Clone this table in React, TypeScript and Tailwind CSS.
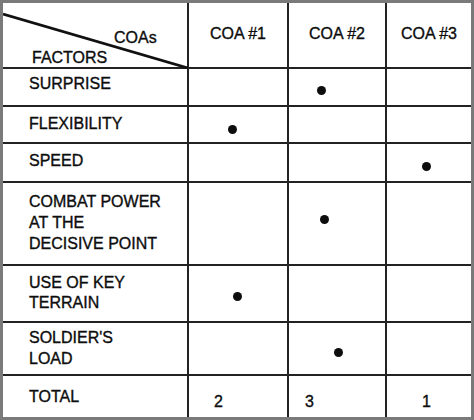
import { Fragment } from 'react'

type Row = {
  lines: string[]
  height: string
  pad: string
  leading: string
  dot: { col: number; ml: number; mt: number }
}

const rows: Row[] = [
  { lines: ['SURPRISE'], height: 'h-[38px]', pad: 'pt-[5px]', leading: 'leading-[20px]', dot: { col: 2, ml: 28, mt: 17 } },
  { lines: ['FLEXIBILITY'], height: 'h-[37px]', pad: 'pt-[7px]', leading: 'leading-[20px]', dot: { col: 1, ml: 39, mt: 18 } },
  { lines: ['SPEED'], height: 'h-[39px]', pad: 'pt-[7px]', leading: 'leading-[20px]', dot: { col: 3, ml: 35, mt: 18 } },
  { lines: ['COMBAT POWER', 'AT THE', 'DECISIVE POINT'], height: 'h-[83px]', pad: 'pt-[8px]', leading: 'leading-[21px]', dot: { col: 2, ml: 31, mt: 32 } },
  { lines: ['USE OF KEY', 'TERRAIN'], height: 'h-[57px]', pad: 'pt-[7px]', leading: 'leading-[20px]', dot: { col: 1, ml: 44, mt: 26 } },
  { lines: ["SOLDIER'S", 'LOAD'], height: 'h-[53px]', pad: 'pt-[4px]', leading: 'leading-[21px]', dot: { col: 2, ml: 45, mt: 25 } },
]

const totals = [
  { value: '2', ml: 25 },
  { value: '3', ml: 16 },
  { value: '1', ml: 35 },
]

const line = 'border-[#222]'

export default function App() {
  return (
    <div
      className="h-[420px] w-[474px] overflow-hidden border-[3px] border-[#7a7a7a] bg-white text-[16px] text-[#0d0d0d] [-webkit-text-stroke:0.35px_#0d0d0d]"
      style={{ fontFamily: '"Liberation Sans", Arial, sans-serif' }}
    >
      <div className="grid grid-cols-[186px_100px_98px_84px]">
        {/* header */}
        <div className={`relative h-[66px] border-r-2 border-b-2 ${line}`}>
          <svg className="absolute inset-0" width="186" height="66" viewBox="0 0 186 66">
            <line x1="0" y1="11" x2="185" y2="65" stroke="#111" strokeWidth="2.8" />
          </svg>
          <div className="relative pt-[25px] leading-[20px]">
            <div className="pl-[111px]">COAs</div>
            <div className="pl-[29px]">FACTORS</div>
          </div>
        </div>
        {['COA #1', 'COA #2', 'COA #3'].map((h, i) => (
          <div
            key={h}
            className={`flex h-[66px] items-center justify-center border-b-2 pb-[2px] ${line} ${i < 2 ? 'border-r-2' : ''}`}
          >
            {h}
          </div>
        ))}

        {rows.map((r) => (
          <Fragment key={r.lines[0]}>
            <div className={`${r.height} border-r-2 border-b-2 pl-[26px] ${r.pad} ${r.leading} ${line}`}>
              {r.lines.map((l) => (
                <div key={l}>{l}</div>
              ))}
            </div>
            {[1, 2, 3].map((c) => (
              <div key={c} className={`${r.height} border-b-2 ${line} ${c < 3 ? 'border-r-2' : ''}`}>
                {r.dot.col === c ? (
                  <div
                    className="h-[9px] w-[9px] rounded-full bg-[#0d0d0d]"
                    style={{ marginLeft: r.dot.ml, marginTop: r.dot.mt }}
                  />
                ) : null}
              </div>
            ))}
          </Fragment>
        ))}

        {/* total */}
        <div className={`h-[41px] border-r-2 pl-[26px] pt-[11px] leading-[20px] ${line}`}>TOTAL</div>
        {totals.map((t, i) => (
          <div key={t.value} className={`h-[41px] pt-[16px] leading-[20px] ${line} ${i < 2 ? 'border-r-2' : ''}`}>
            <span style={{ marginLeft: t.ml }}>{t.value}</span>
          </div>
        ))}
      </div>
    </div>
  )
}
